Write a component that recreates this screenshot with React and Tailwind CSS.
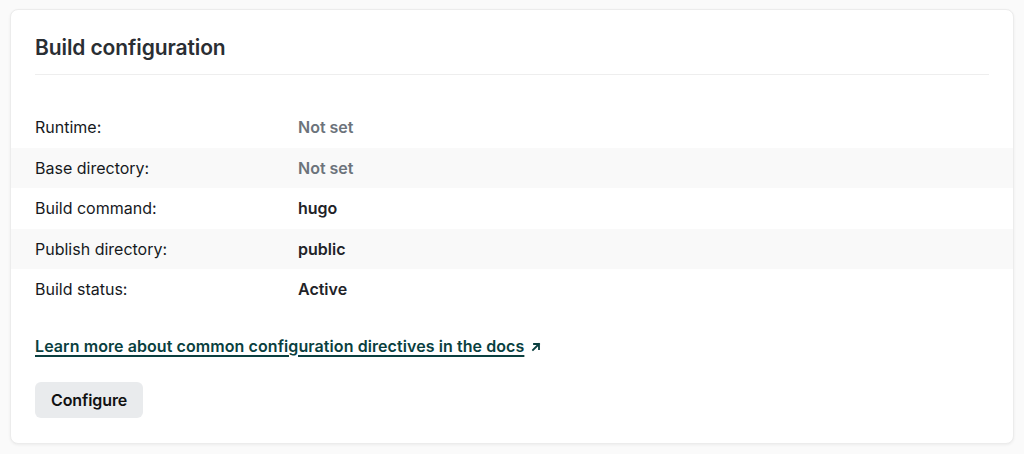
import React from 'react';

const rows = [
  { label: 'Runtime:', value: 'Not set', muted: true },
  { label: 'Base directory:', value: 'Not set', muted: true },
  { label: 'Build command:', value: 'hugo' },
  { label: 'Publish directory:', value: 'public' },
  { label: 'Build status:', value: 'Active' },
];

const ArrowIcon = () => (
  <svg width="12" height="12" viewBox="0 0 12 12" fill="none" className="ml-[6px] mt-[2px]">
    <path d="M3 9L9 3M4 3H9V8" stroke="#0a3f3f" strokeWidth="1.8" strokeLinecap="square" />
  </svg>
);

const App = () => {
  return (
    <div className="min-h-[454px] bg-[#fafafa] px-[10px] pt-[9px] pb-[10px]" style={{ fontFamily: 'Inter, "Liberation Sans", sans-serif' }}>
      <div className="bg-white rounded-[8px] border border-[#ececec] shadow-[0_1px_3px_rgba(0,0,0,0.06)] pb-[25px]">
        <div className="px-[24px] pt-[24px]">
          <h2 className="text-[21px] leading-[28px] font-semibold text-[#2a2e33] tracking-[-0.1px] pb-[12px] border-b border-[#eeeeee]">
            Build configuration
          </h2>
        </div>
        <div className="mt-[32px]">
          {rows.map((row, i) => (
            <div
              key={row.label}
              className={`flex items-center h-[40.5px] px-[24px] text-[16px] ${i % 2 === 1 ? 'bg-[#f9f9f9]' : ''}`}
            >
              <div className="w-[263px] text-[#16191d]">{row.label}</div>
              <div className={`font-semibold ${row.muted ? 'text-[#6c737b]' : 'text-[#1f2328]'}`}>{row.value}</div>
            </div>
          ))}
        </div>
        <div className="px-[24px] mt-[24px] flex items-center">
          <a href="#" className="text-[16px] font-semibold tracking-[0.08px] text-[#0a3f3f] underline underline-offset-[3px] decoration-[1.5px]">
            Learn more about common configuration directives in the docs
          </a>
          <ArrowIcon />
        </div>
        <div className="px-[24px] mt-[24px]">
          <button className="h-[36px] px-[16px] rounded-[6px] bg-[#e9ebed] text-[16px] font-semibold text-[#111] tracking-[-0.1px]">
            Configure
          </button>
        </div>
      </div>
    </div>
  );
};

export default App;
